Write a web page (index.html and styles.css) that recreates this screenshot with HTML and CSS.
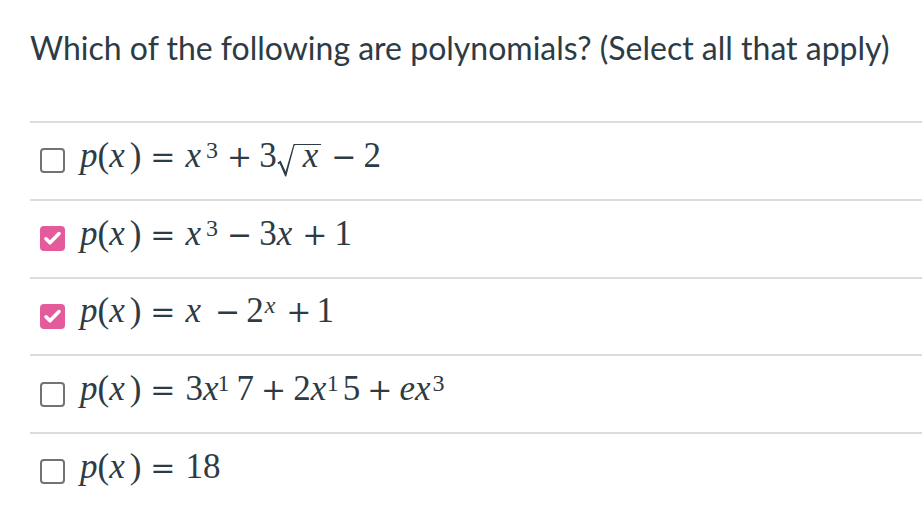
FILE: index.html
```html
<!DOCTYPE html>
<html lang="en">
<head>
<meta charset="utf-8">
<title>Polynomials question</title>
<link rel="stylesheet" href="styles.css">
</head>
<body>
<div class="question">
  <h1 class="prompt">Which of the following are polynomials? (Select all that apply)</h1>
  <ul class="answers">
    <li class="answer">
      <span class="box"></span>
      <span class="math"><i class="v">p</i><span class="lp">(</span><i class="v x">x</i><span class="rp">)</span><span class="op rel">=</span><i class="v x">x</i><span class="sup">3</span><span class="op bin">+</span><span class="n">3</span><span class="sqrt"><svg class="surd" viewBox="0 0 18 33" preserveAspectRatio="none"><path d="M0.5 18.8 L3.6 16.6 L8.6 27.5 L16.6 0 L18 0 L18 1.5 L17.4 1.5 L9.2 32.5 L8.2 32.5 L2.6 19.6 L1.2 20.2 Z"/></svg><span class="rad"><i class="v x">x</i></span></span><span class="op bin after-root">−</span><span class="n">2</span></span>
    </li>
    <li class="answer">
      <span class="box checked"><svg viewBox="0 0 25 25"><path d="M6 12.8 L10 16.8 L19 7.6"/></svg></span>
      <span class="math"><i class="v">p</i><span class="lp">(</span><i class="v x">x</i><span class="rp">)</span><span class="op rel">=</span><i class="v x">x</i><span class="sup">3</span><span class="op bin">−</span><span class="n">3</span><i class="v x">x</i><span class="op bin r2-plus">+</span><span class="n">1</span></span>
    </li>
    <li class="answer">
      <span class="box checked"><svg viewBox="0 0 25 25"><path d="M6 12.8 L10 16.8 L19 7.6"/></svg></span>
      <span class="math"><i class="v">p</i><span class="lp">(</span><i class="v x">x</i><span class="rp">)</span><span class="op rel">=</span><i class="v x">x</i><span class="op bin r3-minus">−</span><span class="n">2</span><span class="sup sx"><i class="v">x</i></span><span class="op bin r3-plus">+</span><span class="n">1</span></span>
    </li>
    <li class="answer">
      <span class="box"></span>
      <span class="math"><i class="v">p</i><span class="lp">(</span><i class="v x">x</i><span class="rp">)</span><span class="op rel">=</span><span class="n">3</span><i class="v x">x</i><span class="sup s1a">1</span><span class="n d7">7</span><span class="op bin r4-plus">+</span><span class="n">2</span><i class="v x">x</i><span class="sup s1b">1</span><span class="n d5">5</span><span class="op bin r4-plus">+</span><i class="v">e</i><i class="v x">x</i><span class="sup s3">3</span></span>
    </li>
    <li class="answer">
      <span class="box"></span>
      <span class="math"><i class="v">p</i><span class="lp">(</span><i class="v x">x</i><span class="rp">)</span><span class="op rel">=</span><span class="n">18</span></span>
    </li>
  </ul>
</div>
</body>
</html>
```

FILE: styles.css
```css
html, body {
  margin: 0;
  padding: 0;
  background: #ffffff;
}

.question {
  padding: 28px 0 0 30px;
  color: #2d3b45;
}

.prompt {
  margin: 0 0 53px 0;
  font-family: Lato, "Liberation Sans", sans-serif;
  font-weight: 400;
  font-size: 32px;
  line-height: 40px;
  white-space: nowrap;
}

.answers {
  list-style: none;
  margin: 0;
  padding: 0;
}

.answer {
  display: flex;
  align-items: center;
  height: 75.75px;
  border-top: 2px solid #dcdcdc;
  padding-left: 10px;
}

.box {
  box-sizing: border-box;
  flex: none;
  width: 25px;
  height: 25px;
  border: 2.5px solid #737373;
  border-radius: 4px;
  background: #fff;
}

.box.checked {
  border: none;
  background: #e45b9c;
}

.box.checked svg {
  display: block;
  width: 25px;
  height: 25px;
}

.box.checked path {
  fill: none;
  stroke: #ffffff;
  stroke-width: 3.6;
  stroke-linecap: round;
  stroke-linejoin: round;
}

.math {
  display: block;
  margin-left: 15px;
  margin-bottom: 10px;
  height: 32px;
  font-family: "Liberation Serif", "Times New Roman", serif;
  font-size: 35px;
  line-height: 32px;
  white-space: nowrap;
  color: #2d3b45;
}

.math i,
.math span {
  line-height: 0;
}

.v {
  font-style: italic;
}

.x {
  padding-right: 2px;
}

.rp {
  margin-left: 3px;
}

.op {
  font-family: "DejaVu Serif", serif;
  font-size: 30px;
}

.rel {
  margin: 0 10px 0 9px;
}

.bin {
  margin: 0 7px 0 9px;
}

.bin.after-root {
  margin-left: 10px;
}

.bin.r2-plus {
  margin-left: 8px;
}

.bin.r3-minus {
  margin: 0 6px 0 12px;
}

.bin.r3-plus {
  margin: 0 5px 0 11px;
}

.bin.r4-plus {
  margin: 0 7px 0 7px;
}

.sup {
  font-size: 24px;
  vertical-align: 9px;
  margin-left: 3px;
}

.sup.sx {
  margin-left: 1px;
}

.sup.s1a {
  margin-left: -3px;
}

.sup.s1b {
  margin-left: -1.5px;
}

.sup.s3 {
  margin-left: 0;
}

.d7 {
  margin-left: 7px;
}

.d5 {
  margin-left: 4px;
}

.sqrt {
  position: relative;
  display: inline-flex;
  padding-left: 18px;
}

.math .sqrt .rad {
  display: inline-block;
  line-height: 22px;
  border-top: 1.5px solid #2d3b45;
  padding: 0 1px 0 8px;
}

.math .rad i {
  line-height: 22px;
}

.surd {
  position: absolute;
  left: 0;
  top: 0;
  width: 18px;
  height: calc(100% + 10px);
  fill: #2d3b45;
}
```
